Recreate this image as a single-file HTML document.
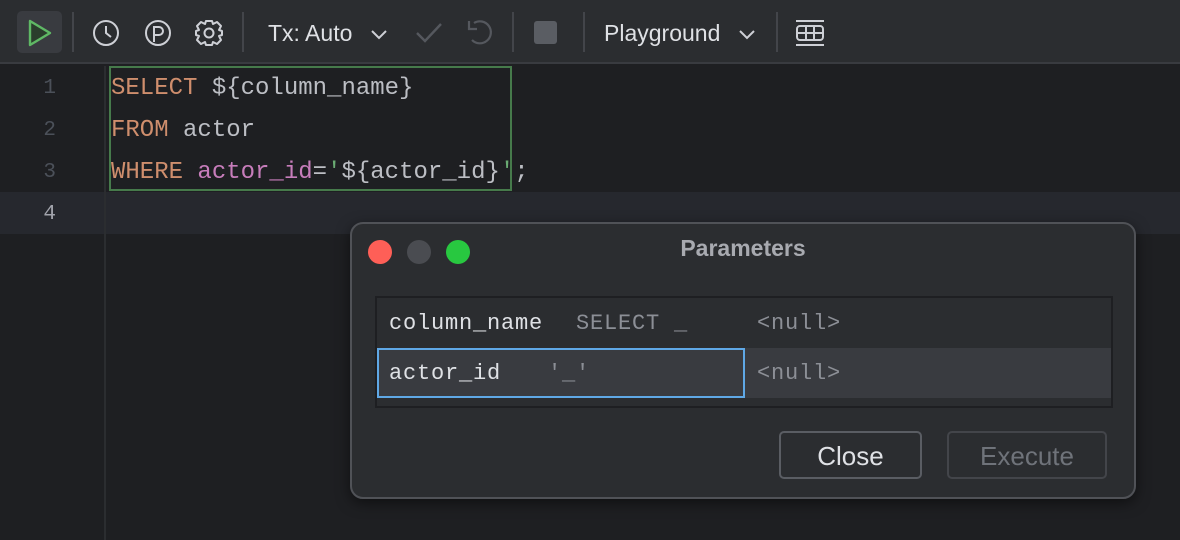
<!DOCTYPE html>
<html><head><style>
*{margin:0;padding:0;box-sizing:border-box}
body{width:1180px;height:540px;background:#1e1f22;position:relative;overflow:hidden;font-family:"Liberation Sans",sans-serif}
.tb{position:absolute;left:0;top:0;width:1180px;height:64px;background:#2b2d30;border-bottom:2px solid #393b40}
.abs{position:absolute}
.sep{position:absolute;top:12px;width:2px;height:40px;background:#43454a}
.tt{position:absolute;top:20px;font-size:23px;color:#dfe1e5}
.code{position:absolute;font-family:"Liberation Mono",monospace;font-size:24px;color:#bcbec4;white-space:pre}
.ln{position:absolute;left:0;width:56px;text-align:right;font-family:"Liberation Mono",monospace;font-size:21px;color:#4b5059}
.k{color:#cf8e6d}.p{color:#c77dbb}.s{color:#6aab73}
.m{font-family:"Liberation Mono",monospace;font-size:22px;position:absolute;white-space:pre;letter-spacing:0.8px}
</style></head><body>
<div class="tb">
 <div class="abs" style="left:17px;top:11px;width:45px;height:42px;background:#393b40;border-radius:5px"></div>
 <svg class="abs" style="left:26px;top:18px" width="28" height="30"><path d="M4 3 L24 15 L4 27 Z" fill="#2a3d2c" stroke="#5fb865" stroke-width="2.4" stroke-linejoin="round"/></svg>
 <div class="sep" style="left:72px"></div>
 <svg class="abs" style="left:90px;top:18px" width="150" height="30">
  <circle cx="16" cy="15" r="12" fill="none" stroke="#ced0d6" stroke-width="2"/><path d="M16 8 V15 L21 19" fill="none" stroke="#ced0d6" stroke-width="2"/>
  <circle cx="68" cy="15" r="12" fill="none" stroke="#ced0d6" stroke-width="2"/><path d="M64 24 V9 H69 A4 4 0 0 1 69 17 H64" fill="none" stroke="#ced0d6" stroke-width="2"/>
  <circle cx="119" cy="15" r="4.5" fill="none" stroke="#ced0d6" stroke-width="2"/>
  <path d="M116 3 H122 L123 6 L127 4 L131 8 L129 12 L132 13 V17 L129 18 L131 22 L127 26 L123 24 L122 27 H116 L115 24 L111 26 L107 22 L109 18 L106 17 V13 L109 12 L107 8 L111 4 L115 6 Z" fill="none" stroke="#ced0d6" stroke-width="2" stroke-linejoin="round"/>
 </svg>
 <div class="sep" style="left:242px"></div>
 <div class="tt" style="left:268px">Tx: Auto</div>
 <svg class="abs" style="left:370px;top:29px" width="18" height="12"><path d="M2 2 L9 9 L16 2" fill="none" stroke="#ced0d6" stroke-width="2"/></svg>
 <svg class="abs" style="left:414px;top:20px" width="30" height="26"><path d="M3 13 L11 21 L27 4" fill="none" stroke="#55585e" stroke-width="2.4"/></svg>
 <svg class="abs" style="left:466px;top:18px" width="30" height="30"><path d="M8 5 A11 11 0 1 1 6 22" fill="none" stroke="#55585e" stroke-width="2.2"/><path d="M3 3 V11 H11" fill="none" stroke="#55585e" stroke-width="2.2"/></svg>
 <div class="sep" style="left:512px"></div>
 <div class="abs" style="left:534px;top:21px;width:23px;height:23px;background:#5a5d63;border-radius:3px"></div>
 <div class="sep" style="left:583px"></div>
 <div class="tt" style="left:604px">Playground</div>
 <svg class="abs" style="left:738px;top:29px" width="18" height="12"><path d="M2 2 L9 9 L16 2" fill="none" stroke="#ced0d6" stroke-width="2"/></svg>
 <div class="sep" style="left:776px"></div>
 <svg class="abs" style="left:795px;top:19px" width="32" height="28"><path d="M1 2 H29 M1 26 H29" stroke="#ced0d6" stroke-width="2"/><rect x="2" y="7" width="26" height="14" rx="3" fill="none" stroke="#ced0d6" stroke-width="2"/><path d="M2 14 H28 M11 7 V21 M19 7 V21" stroke="#ced0d6" stroke-width="2"/></svg>
</div>
<div class="abs" style="left:0;top:192px;width:1180px;height:42px;background:#26282e"></div>
<div class="abs" style="left:104px;top:66px;width:2px;height:474px;background:#2b2d30"></div>
<div class="ln" style="top:77px">1</div><div class="ln" style="top:119px">2</div><div class="ln" style="top:161px">3</div><div class="ln" style="top:203px;color:#a1a3ab">4</div>
<div class="abs" style="left:109px;top:66px;width:403px;height:125px;border:2px solid #467a4b"></div>
<div class="code" style="left:111px;top:75px"><span class="k">SELECT</span> ${column_name}</div>
<div class="code" style="left:111px;top:117px"><span class="k">FROM</span> actor</div>
<div class="code" style="left:111px;top:159px"><span class="k">WHERE</span> <span class="p">actor_id</span>=<span class="s">'</span>${actor_id}<span class="s">'</span>;</div>

<div class="abs" style="left:350px;top:222px;width:786px;height:277px;background:#2b2d30;border:2px solid #505257;border-radius:13px;box-shadow:0 4px 14px rgba(0,0,0,.5)">
 <div class="abs" style="left:16px;top:16px;width:24px;height:24px;border-radius:50%;background:#fe5f57"></div>
 <div class="abs" style="left:55px;top:16px;width:24px;height:24px;border-radius:50%;background:#4a4c51"></div>
 <div class="abs" style="left:94px;top:16px;width:24px;height:24px;border-radius:50%;background:#28c840"></div>
 <div class="abs" style="left:0;width:782px;top:11px;text-align:center;font-size:23px;font-weight:bold;color:#a8aab0">Parameters</div>
 <div class="abs" style="left:23px;top:72px;width:738px;height:112px;border:2px solid #1e1f22;background:#2b2d30">
  <div class="abs" style="left:0;top:50px;width:734px;height:50px;background:#393b40"></div>
  <div class="m" style="left:12px;top:13px;color:#dfe1e5">column_name</div>
  <div class="m" style="left:199px;top:13px;color:#8c8f96">SELECT _</div>
  <div class="m" style="left:380px;top:13px;color:#8c8f96">&lt;null&gt;</div>
  <div class="abs" style="left:0;top:50px;width:368px;height:50px;border:2px solid #5fa8e6;background:#393b40"></div>
  <div class="m" style="left:12px;top:63px;color:#dfe1e5">actor_id</div>
  <div class="m" style="left:171px;top:63px;color:#8c8f96">'_'</div>
  <div class="m" style="left:380px;top:63px;color:#8c8f96">&lt;null&gt;</div>
 </div>
 <div class="abs" style="left:427px;top:207px;width:143px;height:48px;border:2px solid #5a5d63;border-radius:5px;background:#2b2d30;color:#dfe1e5;font-size:26px;text-align:center;line-height:46px">Close</div>
 <div class="abs" style="left:595px;top:207px;width:160px;height:48px;border:2px solid #43454a;border-radius:5px;color:#6f737a;font-size:26px;text-align:center;line-height:46px">Execute</div>
</div>
</body></html>
